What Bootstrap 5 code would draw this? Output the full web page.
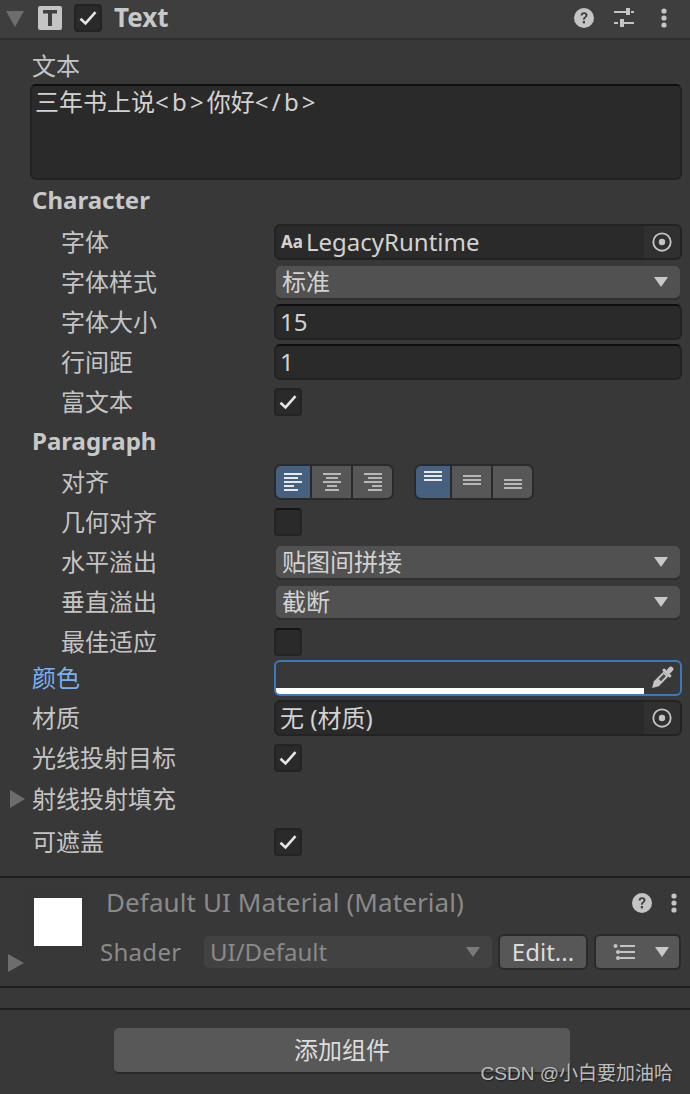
<!DOCTYPE html>
<html lang="zh">

<head>
  <meta charset="UTF-8">
  <meta name="viewport" content="width=device-width, initial-scale=1">
  <title>Text Inspector</title>
  <link href="https://cdn.jsdelivr.net/npm/bootstrap@5.3.3/dist/css/bootstrap.min.css" rel="stylesheet">
  <style>
    html, body { background: #383838; }
    body { width: 690px; height: 1094px; overflow: hidden; position: relative; color: #c4c4c4; font-family: "Noto Sans", "Noto Sans CJK SC", sans-serif; font-size: 24px; line-height: 1.2; }
    .comp-head { height: 40px; background: #3e3e3e; border-bottom: 2px solid #2f2f2f; padding: 3px 0 5px 6px; }
    .comp-title { font-weight: 700; font-size: 26px; margin-left: 12px; color: #c8c8c8; }
    .tri-down { width: 18px; height: 16px; margin-top: 1px; }
    .t-icon { width: 24px; height: 24px; background: #c4c4c4; border-radius: 2px; margin-left: 14px; margin-right: 12px; }
    .head-tools { margin-left: auto; padding-right: 23px; }
    .tool-a { margin-right: 20px; }
    .tool-b { margin-right: 27px; }
    .sec-body { padding: 8px 8px 0 32px; }
    .txt-label { height: 36px; }
    .txt-area { margin-left: -2px; height: 96px; background: #2a2a2a; border: 2px solid #232323; border-top-color: #0f0f0f; border-radius: 6px; padding: 0 3px; font-size: 24px; color: #d2d2d2; line-height: 32px; }
    .tag-sp { letter-spacing: 3.2px; }
    .sec-title { height: 40px; font-weight: 700; color: #c8c8c8; }
    .sec-first { height: 42px; padding-bottom: 1px; }
    .sec-second { padding-bottom: 2px; }
    .prop { height: 40px; }
    .prop-name { width: 242px; flex: none; white-space: nowrap; }
    .ind { padding-left: 30px; margin-left: -1px; margin-right: 1px; }
    .prop-val { flex: 1; min-width: 0; }
    .obj-field, .num-field { height: 36px; background: #2a2a2a; border: 2px solid #232323; border-radius: 6px; padding-left: 4px; color: #d2d2d2; overflow: hidden; }
    .num-field { border-top-color: #0f0f0f; }
    .aa-tag { font-size: 17px; font-weight: 700; margin-right: 3px; margin-left: 1px; }
    .pick-btn { margin-left: auto; width: 36px; height: 100%; background: #303030; }
    .popup-field { height: 32px; margin: 0 2px; background: #515151; border-radius: 5px; padding: 0 12px 0 6px; box-shadow: 0 2px 0 #2e2e2e; color: #d2d2d2; }
    .arrow-d { margin-left: auto; flex: none; }
    .chk { width: 28px; height: 28px; background: #2a2a2a; border: 2px solid #232323; border-radius: 4px; }
    .chk-off { border-top-color: #151515; }
    .seg-wrap { background: #2a2a2a; border-radius: 7px; padding: 2px; height: 36px; gap: 2px; }
    .seg-item { width: 39px; height: 100%; background: #575757; }
    .seg-item:first-child { border-radius: 5px 0 0 5px; width: 34px; background: #46607f; }
    .seg-item:last-child { border-radius: 0 5px 5px 0; }
    .seg-gap { margin-left: 20px; }
    .h-short { height: 38px; padding-top: 2px; }
    .color-label { height: 36px; margin-bottom: 2px; color: #7bb0f0; }
    .color-field { height: 36px; border: 2px solid #3a79bb; border-radius: 6px; overflow: hidden; }
    .color-bar { height: 6px; width: 368px; background: #fff; margin-top: auto; }
    .drop-btn { margin-left: auto; width: 36px; height: 100%; }
    .raycast-row { margin-top: 1px; position: relative; }
    .tri-right { position: absolute; left: -22px; top: 11px; }
    .last-check { margin-top: 3px; }
    .sep { height: 2px; background: #1e1e1e; }
    .sep-top { margin-top: 14px; }
    .mat-box { height: 108px; position: relative; padding: 0 0 0 100px; color: #8a8a8a; }
    .mat-thumb { width: 64px; height: 64px; position: absolute; left: 26px; top: 12px; background: #373737; padding: 8px; }
    .mat-thumb div { width: 48px; height: 48px; background: #fff; }
    .mat-tri { position: absolute; left: 8px; top: 76px; }
    .mat-name { height: 50px; padding-left: 6px; font-size: 26px; letter-spacing: .1px; white-space: nowrap; }
    .mat-tools { margin-left: auto; padding-right: 13px; }
    .tool-c { margin-right: 19px; }
    .mat-row { margin-top: 6px; }
    .mat-shader { width: 104px; flex: none; letter-spacing: .3px; }
    .shader-pop { width: 288px; height: 32px; background: #424242; border-radius: 5px; padding: 0 12px 0 6px; color: #8a8a8a; }
    .edit-btn { margin-left: 6px; width: 90px; height: 36px; background: #2a2a2a; border-radius: 6px; padding: 2px; }
    .edit-btn div, .list-btn div { background: #575757; border-radius: 4px; width: 100%; height: 100%; color: #dcdcdc; }
    .list-btn { margin-left: 6px; width: 87px; height: 36px; background: #2a2a2a; border-radius: 6px; padding: 2px; }
    .list-inner { padding: 0 10px 0 17px; }
    .gap-strip { height: 20px; }
    .add-wrap { padding-top: 18px; }
    .add-btn { width: 456px; height: 46px; margin-left: 114px; background: #585858; color: #dcdcdc; border: 0; border-bottom: 2px solid #2a2a2a; border-radius: 5px; font-size: 24px; padding: 0; }
    .add-btn:hover { background: #585858; color: #dcdcdc; }
    .wm { position: absolute; right: 17px; top: 1061px; font-size: 19px; line-height: 26px; color: #bdbdbd; text-shadow: 1px 1px 1px #222; white-space: nowrap; font-family: "Liberation Sans", "Noto Sans CJK SC", sans-serif; }
  </style>
</head>

<body>
  <svg width="0" height="0" class="d-block position-absolute">
    <defs>
      <symbol id="ico-check" viewBox="0 0 24 24"><path d="M3 13l6 5.500L21 5" fill="none" stroke="#e4e4e4" stroke-width="3.200"/></symbol>
      <symbol id="ico-target" viewBox="0 0 24 24"><circle cx="12" cy="12" r="9.500" fill="none" stroke="#c4c4c4" stroke-width="2"/><circle cx="12" cy="12" r="3.500" fill="#c4c4c4"/></symbol>
      <symbol id="ico-help" viewBox="0 0 20 20"><circle cx="10" cy="10" r="10" fill="#c4c4c4"/><path d="M6.600 7.400C6.700 5.400 8.100 4.200 10.100 4.200c2 0 3.400 1.200 3.400 2.900 0 1.400-.8 2.100-1.800 2.800-.8.600-1 .9-1 1.900H8.900c0-1.500.4-2.200 1.400-2.900.8-.6 1.200-1 1.200-1.700 0-.8-.6-1.300-1.400-1.300-.9 0-1.500.6-1.600 1.500z" fill="#3e3e3e"/><rect x="8.800" y="13" width="2.200" height="2.400" fill="#3e3e3e"/></symbol>
      <symbol id="ico-dots" viewBox="0 0 6 20"><circle cx="3" cy="3" r="2.600" fill="#c4c4c4"/><circle cx="3" cy="10" r="2.600" fill="#c4c4c4"/><circle cx="3" cy="17" r="2.600" fill="#c4c4c4"/></symbol>
    </defs>
  </svg>

  <!-- Cabecera del componente -->
  <div class="comp-head d-flex align-items-center">
    <svg class="tri-down" viewBox="0 0 18 16"><path d="M0 0h18L9 16z" fill="#6d6d6d"/></svg>
    <div class="t-icon d-flex align-items-center justify-content-center">
      <svg width="14" height="16" viewBox="0 0 14 16"><path d="M0 0h14v3.500H9V16H5V3.500H0z" fill="#404040"/></svg>
    </div>
    <div class="chk d-flex align-items-center justify-content-center"><svg width="20" height="20"><use href="#ico-check"/></svg></div>
    <div class="comp-title">Text</div>
    <div class="head-tools d-flex align-items-center">
      <svg class="tool-a" width="20" height="20"><use href="#ico-help"/></svg>
      <svg class="tool-b" width="20" height="20" viewBox="0 0 20 20"><path d="M0 4h12M17 4h3M0 15h4M8 15h12" stroke="#c4c4c4" stroke-width="2.200"/><rect x="12" y="0" width="4" height="7" fill="#c4c4c4"/><rect x="6" y="11" width="4" height="8" fill="#c4c4c4"/></svg>
      <svg width="6" height="20"><use href="#ico-dots"/></svg>
    </div>
  </div>

  <div class="sec-body">
    <div class="txt-label d-flex align-items-center">文本</div>
    <div class="txt-area">三年书上说<span class="tag-sp">&lt;b&gt;</span>你好<span class="tag-sp">&lt;/b&gt;</span></div>

    <div class="sec-title sec-first d-flex align-items-center">Character</div>

    <div class="prop d-flex align-items-center">
      <div class="prop-name ind">字体</div>
      <div class="prop-val"><div class="obj-field d-flex align-items-center"><span class="aa-tag">Aa</span>LegacyRuntime<span class="pick-btn d-flex align-items-center justify-content-center"><svg width="22" height="22"><use href="#ico-target"/></svg></span></div></div>
    </div>
    <div class="prop d-flex align-items-center">
      <div class="prop-name ind">字体样式</div>
      <div class="prop-val"><div class="popup-field d-flex align-items-center">标准<svg class="arrow-d" width="14" height="10" viewBox="0 0 14 10"><path d="M0 0h14L7 10z" fill="#c8c8c8"/></svg></div></div>
    </div>
    <div class="prop d-flex align-items-center">
      <div class="prop-name ind">字体大小</div>
      <div class="prop-val"><div class="num-field d-flex align-items-center">15</div></div>
    </div>
    <div class="prop d-flex align-items-center">
      <div class="prop-name ind">行间距</div>
      <div class="prop-val"><div class="num-field d-flex align-items-center">1</div></div>
    </div>
    <div class="prop d-flex align-items-center">
      <div class="prop-name ind">富文本</div>
      <div class="chk d-flex align-items-center justify-content-center"><svg width="20" height="20"><use href="#ico-check"/></svg></div>
    </div>

    <div class="sec-title sec-second d-flex align-items-center">Paragraph</div>

    <div class="prop d-flex align-items-center">
      <div class="prop-name ind">对齐</div>
      <div class="d-flex">
        <div class="seg-wrap d-flex">
          <div class="seg-item d-flex align-items-center justify-content-center"><svg width="18" height="18" viewBox="0 0 18 18"><path d="M0 1h18M0 5h14M0 9h18M0 13h10M0 17h14" stroke="#e8e8e8" stroke-width="2"/></svg></div>
          <div class="seg-item d-flex align-items-center justify-content-center"><svg width="18" height="18" viewBox="0 0 18 18"><path d="M0 1h18M3 5h12M0 9h18M4 13h10M2 17h14" stroke="#b8b8b8" stroke-width="2"/></svg></div>
          <div class="seg-item d-flex align-items-center justify-content-center"><svg width="18" height="18" viewBox="0 0 18 18"><path d="M0 1h18M4 5h14M0 9h18M8 13h10M4 17h14" stroke="#b8b8b8" stroke-width="2"/></svg></div>
        </div>
        <div class="seg-wrap seg-gap d-flex">
          <div class="seg-item d-flex justify-content-center"><svg width="18" height="30" viewBox="0 0 18 30"><path d="M0 6h18M0 10h18M0 14h18" stroke="#e8e8e8" stroke-width="2"/></svg></div>
          <div class="seg-item d-flex justify-content-center"><svg width="18" height="30" viewBox="0 0 18 30"><path d="M0 10h18M0 14h18M0 18h18" stroke="#b8b8b8" stroke-width="2"/></svg></div>
          <div class="seg-item d-flex justify-content-center"><svg width="18" height="30" viewBox="0 0 18 30"><path d="M0 14h18M0 18h18M0 22h18" stroke="#b8b8b8" stroke-width="2"/></svg></div>
        </div>
      </div>
    </div>
    <div class="prop d-flex align-items-center">
      <div class="prop-name ind">几何对齐</div>
      <div class="chk chk-off"></div>
    </div>
    <div class="prop d-flex align-items-center">
      <div class="prop-name ind">水平溢出</div>
      <div class="prop-val"><div class="popup-field d-flex align-items-center">贴图间拼接<svg class="arrow-d" width="14" height="10" viewBox="0 0 14 10"><path d="M0 0h14L7 10z" fill="#c8c8c8"/></svg></div></div>
    </div>
    <div class="prop d-flex align-items-center">
      <div class="prop-name ind">垂直溢出</div>
      <div class="prop-val"><div class="popup-field d-flex align-items-center">截断<svg class="arrow-d" width="14" height="10" viewBox="0 0 14 10"><path d="M0 0h14L7 10z" fill="#c8c8c8"/></svg></div></div>
    </div>
    <div class="prop h-short d-flex align-items-center">
      <div class="prop-name ind">最佳适应</div>
      <div class="chk chk-off"></div>
    </div>

    <div class="prop color-label d-flex align-items-center">
      <div class="prop-name">颜色</div>
      <div class="prop-val"><div class="color-field d-flex">
        <div class="color-bar"></div>
        <div class="drop-btn d-flex align-items-center justify-content-center">
          <svg width="24" height="24" viewBox="0 0 24 24"><g transform="rotate(45 12 12)"><rect x="9.500" y="-3" width="5" height="7" rx="2.400" fill="#c4c4c4"/><rect x="6.500" y="3.500" width="11" height="3" rx="1" fill="#c4c4c4"/><path d="M8.500 6.500h7V20l-3.500 6-3.500-6z" fill="#c4c4c4"/><path d="M10.500 8h3v7h-3z" fill="#4a4a4a"/></g></svg>
        </div>
      </div></div>
    </div>

    <div class="prop d-flex align-items-center">
      <div class="prop-name">材质</div>
      <div class="prop-val"><div class="obj-field d-flex align-items-center">无 (材质)<span class="pick-btn d-flex align-items-center justify-content-center"><svg width="22" height="22"><use href="#ico-target"/></svg></span></div></div>
    </div>
    <div class="prop d-flex align-items-center">
      <div class="prop-name">光线投射目标</div>
      <div class="chk d-flex align-items-center justify-content-center"><svg width="20" height="20"><use href="#ico-check"/></svg></div>
    </div>
    <div class="prop raycast-row d-flex align-items-center">
      <svg class="tri-right" width="15" height="18" viewBox="0 0 15 18"><path d="M0 0l15 9L0 18z" fill="#6d6d6d"/></svg>
      <div class="prop-name">射线投射填充</div>
    </div>
    <div class="prop last-check d-flex align-items-center">
      <div class="prop-name">可遮盖</div>
      <div class="chk d-flex align-items-center justify-content-center"><svg width="20" height="20"><use href="#ico-check"/></svg></div>
    </div>
  </div>

  <div class="sep sep-top"></div>

  <!-- Material -->
  <div class="mat-box">
    <div class="mat-thumb"><div></div></div>
    <svg class="mat-tri" width="16" height="18" viewBox="0 0 16 18"><path d="M0 0l16 9L0 18z" fill="#6d6d6d"/></svg>
    <div class="mat-name d-flex align-items-center">Default UI Material (Material)
      <div class="mat-tools d-flex align-items-center">
        <svg class="tool-c" width="20" height="20"><use href="#ico-help"/></svg>
        <svg width="6" height="20"><use href="#ico-dots"/></svg>
      </div>
    </div>
    <div class="mat-row d-flex align-items-center">
      <div class="mat-shader">Shader</div>
      <div class="shader-pop d-flex align-items-center">UI/Default<svg class="arrow-d" width="14" height="10" viewBox="0 0 14 10"><path d="M0 0h14L7 10z" fill="#7a7a7a"/></svg></div>
      <div class="edit-btn"><div class="d-flex align-items-center justify-content-center">Edit...</div></div>
      <div class="list-btn"><div class="list-inner d-flex align-items-center justify-content-between">
        <svg width="22" height="16" viewBox="0 0 22 16"><path d="M7 2h15M7 8h15M7 14h15" stroke="#c4c4c4" stroke-width="2"/><circle cx="2.500" cy="2" r="2" fill="#c4c4c4"/><circle cx="5" cy="8" r="2" fill="#c4c4c4"/><circle cx="5" cy="14" r="2" fill="#c4c4c4"/></svg>
        <svg width="14" height="10" viewBox="0 0 14 10"><path d="M0 0h14L7 10z" fill="#c8c8c8"/></svg>
      </div></div>
    </div>
  </div>
  <div class="sep"></div>
  <div class="gap-strip"></div>
  <div class="sep"></div>

  <div class="add-wrap">
    <button type="button" class="btn add-btn d-block">添加组件</button>
  </div>

  <div class="wm">CSDN @小白要加油哈</div>

  <script src="https://cdn.jsdelivr.net/npm/bootstrap@5.3.3/dist/js/bootstrap.bundle.min.js"></script>
</body>

</html>
